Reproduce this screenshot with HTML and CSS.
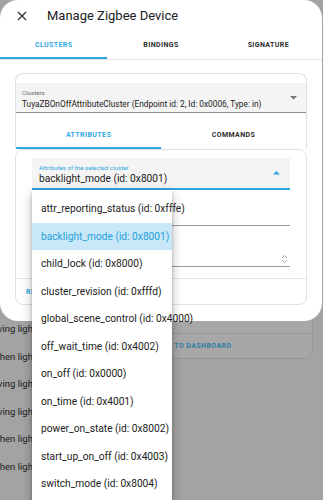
FILE: index.html
```html
<!DOCTYPE html>
<html>
<head>
<meta charset="utf-8">
<link rel="stylesheet" href="styles.css">
</head>
<body>
<div class="page">
  <div class="bg-list">
    <div class="bg-row"><span>living light</span></div>
    <div class="bg-row"><span>kitchen light</span></div>
    <div class="bg-row"><span>living light</span></div>
    <div class="bg-row"><span>living light</span></div>
    <div class="bg-row"><span>kitchen light</span></div>
    <div class="bg-row"><span>kitchen light</span></div>
  </div>
  <div class="bg-card">
    <div class="bg-card-body"></div>
    <div class="bg-card-actions"><span class="bg-btn">GO TO DASHBOARD</span></div>
  </div>
</div>

<div class="dialog">
  <header class="dlg-head">
    <svg class="close" width="10" height="10" viewBox="0 0 10 10"><path d="M1 1L9 9M9 1L1 9" stroke="#333" stroke-width="1.3" fill="none"/></svg>
    <h1 class="title">Manage Zigbee Device</h1>
  </header>
  <nav class="tabs">
    <div class="tab active">CLUSTERS</div>
    <div class="tab">BINDINGS</div>
    <div class="tab">SIGNATURE</div>
  </nav>
  <div class="dlg-content">
    <div class="card1">
      <div class="select">
        <div class="select-text">
          <div class="label">Clusters</div>
          <div class="value">TuyaZBOnOffAttributeCluster (Endpoint id: 2, Id: 0x0006, Type: in)</div>
        </div>
        <svg class="arrow" width="7" height="4" viewBox="0 0 7 4"><path d="M0 0L7 0L3.5 3.5Z" fill="#757575"/></svg>
      </div>
      <div class="itabs">
        <div class="itab active">ATTRIBUTES</div>
        <div class="itab">COMMANDS</div>
      </div>
    </div>
    <div class="card2">
      <div class="fields">
        <div class="select select-focus">
          <div class="select-text">
            <div class="label">Attributes of the selected cluster</div>
            <div class="value">backlight_mode (id: 0x8001)</div>
          </div>
          <svg class="arrow" width="7" height="4" viewBox="0 0 7 4"><path d="M0 3.5L7 3.5L3.5 0Z" fill="#2fa8e2"/></svg>
        </div>
        <div class="tf"></div>
        <div class="tf tf-num">
          <svg class="spin" width="7" height="10" viewBox="0 0 7 10"><path d="M1 4L3.5 1.5L6 4M1 6L3.5 8.5L6 6" stroke="#9a9a9a" stroke-width="0.9" fill="none"/></svg>
        </div>
      </div>
      <div class="actions">
        <span class="btn">READ ATTRIBUTE</span>
        <span class="btn">WRITE ATTRIBUTE</span>
      </div>
    </div>
  </div>
</div>

<div class="menu">
  <div class="item">attr_reporting_status (id: 0xfffe)</div>
  <div class="item sel">backlight_mode (id: 0x8001)</div>
  <div class="item">child_lock (id: 0x8000)</div>
  <div class="item">cluster_revision (id: 0xfffd)</div>
  <div class="item">global_scene_control (id: 0x4000)</div>
  <div class="item">off_wait_time (id: 0x4002)</div>
  <div class="item">on_off (id: 0x0000)</div>
  <div class="item">on_time (id: 0x4001)</div>
  <div class="item">power_on_state (id: 0x8002)</div>
  <div class="item">start_up_on_off (id: 0x4003)</div>
  <div class="item">switch_mode (id: 0x8004)</div>
</div>
</body>
</html>
```
FILE: styles.css
```css
html, body {
  margin: 0;
  padding: 0;
}
body {
  width: 323px;
  height: 500px;
  overflow: hidden;
  position: relative;
  background: #a3a3a3;
  font-family: Roboto, "Noto Sans", sans-serif;
  color: #212121;
}

/* background page (under scrim) */
.page {
  display: flex;
  padding-top: 315px;
}
.bg-list {
  width: 36px;
  flex: none;
  overflow: hidden;
}
.bg-row {
  height: 27.5px;
  line-height: 27.5px;
  font-size: 9.5px;
  color: #1c1c1c;
  white-space: nowrap;
  display: flex;
  justify-content: flex-end;
}
.bg-row span {
  flex: none;
}
.bg-card {
  flex: 1;
  margin-left: 8px;
  margin-right: 10px;
  align-self: flex-start;
  background: #a7a7a7;
  border: 1px solid #989898;
  border-top: none;
  border-radius: 0 0 10px 10px;
}
.bg-card-body {
  height: 18px;
}
.bg-card-actions {
  border-top: 1px solid #959595;
  height: 24px;
  display: flex;
  align-items: center;
  padding-left: 117px;
}
.bg-btn {
  font-size: 7px;
  font-weight: 700;
  letter-spacing: 0.4px;
  color: #2d7ea5;
  white-space: nowrap;
}

/* dialog */
.dialog {
  position: absolute;
  top: 0;
  left: 0;
  width: 322px;
  height: 321px;
  background: #fff;
  border-radius: 18px;
  overflow: hidden;
}
.dlg-head {
  height: 31px;
  display: flex;
  align-items: center;
  padding-left: 17px;
  gap: 20px;
}
.close {
  flex: none;
}
.title {
  margin: 0;
  font-size: 13px;
  font-weight: 400;
  color: #212121;
}
.tabs {
  display: flex;
  border-bottom: 1px solid #e3e3e3;
}
.tab {
  flex: 1;
  height: 28px;
  display: flex;
  align-items: center;
  justify-content: center;
  font-size: 7px;
  font-weight: 700;
  letter-spacing: 0.4px;
  color: #2b2b2b;
}
.tab.active,
.itab.active {
  color: #2fa8e2;
  box-shadow: inset 0 -2px 0 #2fa8e2;
}
.dlg-content {
  padding: 13px 15px 0;
}
.card1 {
  border: 1px solid #e0e0e0;
  border-bottom: none;
  border-radius: 8px 8px 0 0;
  padding-top: 9px;
}
.select {
  background: #f4f4f4;
  height: 23px;
  padding: 6px 9px 0 6px;
  border-bottom: 1px solid #8c8c8c;
  display: flex;
  align-items: flex-start;
}
.select-text {
  flex: 1;
  min-width: 0;
}
.label {
  font-size: 6.2px;
  line-height: 9px;
  color: #6b6b6b;
}
.value {
  font-size: 8.3px;
  line-height: 12px;
  color: #212121;
  white-space: nowrap;
}
.arrow {
  flex: none;
  align-self: center;
  margin-top: -6px;
}
.itabs {
  display: flex;
  padding-top: 8px;
}
.itab {
  flex: 1;
  height: 28px;
  display: flex;
  align-items: center;
  justify-content: center;
  font-size: 7px;
  font-weight: 700;
  letter-spacing: 0.4px;
  color: #2b2b2b;
}
.card2 {
  border: 1px solid #e0e0e0;
  border-radius: 8px;
}
.fields {
  padding: 8px 16px 0;
}
.select-focus {
  height: 24px;
  padding: 6px 10px 0 7px;
  border-bottom: 2px solid #2fa8e2;
}
.select-focus .label {
  color: #2fa8e2;
}
.select-focus .value {
  font-size: 10.2px;
}
.tf {
  height: 35px;
  border-bottom: 1px solid #9c9c9c;
}
.tf-num {
  height: 40px;
  display: flex;
  justify-content: flex-end;
  align-items: flex-end;
  padding-right: 2px;
  margin-bottom: 11px;
}
.spin {
  margin-bottom: 2px;
}
.actions {
  border-top: 1px solid #e6e6e6;
  height: 25px;
  display: flex;
  align-items: center;
  padding-left: 10px;
  gap: 14px;
}
.btn {
  font-size: 7px;
  font-weight: 700;
  letter-spacing: 0.4px;
  color: #2fa8e2;
  white-space: nowrap;
}

/* dropdown menu */
.menu {
  position: absolute;
  left: 32px;
  top: 190px;
  width: 140px;
  height: 320px;
  padding-top: 5px;
  background: #fff;
  box-shadow: 0 4px 10px rgba(0, 0, 0, 0.28), 0 1px 3px rgba(0, 0, 0, 0.2);
}
.item {
  height: 27.5px;
  line-height: 27.5px;
  padding-left: 9px;
  font-size: 10.2px;
  color: #212121;
  white-space: nowrap;
}
.item.sel {
  background: #c8e8f7;
  color: #27a0db;
}
```
